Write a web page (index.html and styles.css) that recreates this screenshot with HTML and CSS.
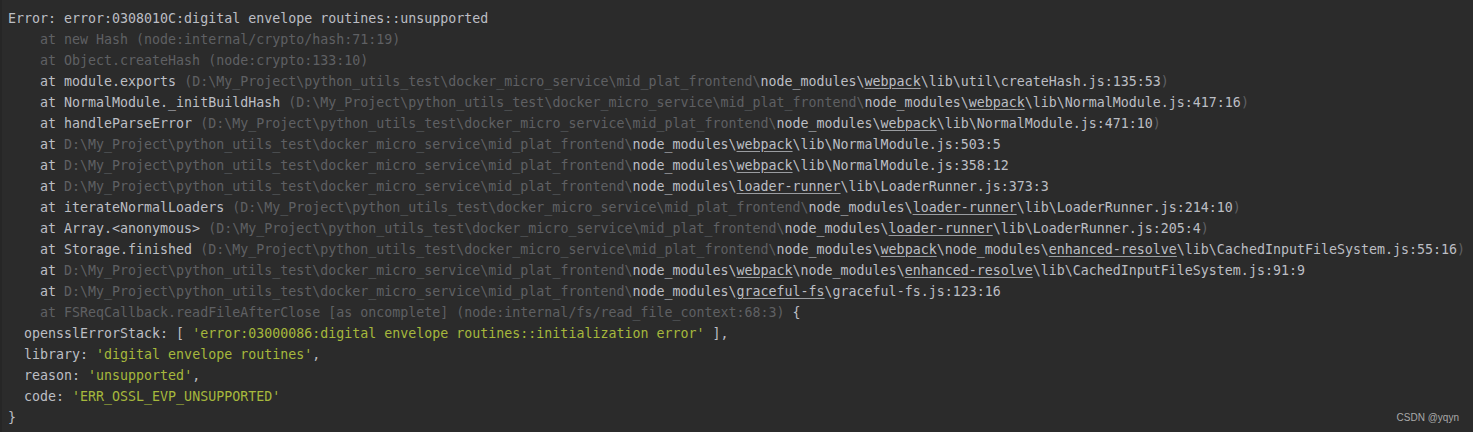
FILE: index.html
```html
<!DOCTYPE html>
<html lang="en">
<head>
<meta charset="utf-8">
<title>Console</title>
<link rel="stylesheet" href="styles.css">
</head>
<body>
<div class="console">
<div class="line">Error: error:0308010C:digital envelope routines::unsupported</div>
<div class="line dim">    at new Hash (node:internal/crypto/hash:71:19)</div>
<div class="line dim">    at Object.createHash (node:crypto:133:10)</div>
<div class="line">    at module.exports <span class="dim">(D:\My_Project\python_utils_test\docker_micro_service\mid_plat_frontend\</span>node_modules\<span class="u">webpack</span>\lib\util\createHash.js:135:53<span class="dim">)</span></div>
<div class="line">    at NormalModule._initBuildHash <span class="dim">(D:\My_Project\python_utils_test\docker_micro_service\mid_plat_frontend\</span>node_modules\<span class="u">webpack</span>\lib\NormalModule.js:417:16<span class="dim">)</span></div>
<div class="line">    at handleParseError <span class="dim">(D:\My_Project\python_utils_test\docker_micro_service\mid_plat_frontend\</span>node_modules\<span class="u">webpack</span>\lib\NormalModule.js:471:10<span class="dim">)</span></div>
<div class="line">    at <span class="dim">D:\My_Project\python_utils_test\docker_micro_service\mid_plat_frontend\</span>node_modules\<span class="u">webpack</span>\lib\NormalModule.js:503:5</div>
<div class="line">    at <span class="dim">D:\My_Project\python_utils_test\docker_micro_service\mid_plat_frontend\</span>node_modules\<span class="u">webpack</span>\lib\NormalModule.js:358:12</div>
<div class="line">    at <span class="dim">D:\My_Project\python_utils_test\docker_micro_service\mid_plat_frontend\</span>node_modules\<span class="u">loader-runner</span>\lib\LoaderRunner.js:373:3</div>
<div class="line">    at iterateNormalLoaders <span class="dim">(D:\My_Project\python_utils_test\docker_micro_service\mid_plat_frontend\</span>node_modules\<span class="u">loader-runner</span>\lib\LoaderRunner.js:214:10<span class="dim">)</span></div>
<div class="line">    at Array.&lt;anonymous&gt; <span class="dim">(D:\My_Project\python_utils_test\docker_micro_service\mid_plat_frontend\</span>node_modules\<span class="u">loader-runner</span>\lib\LoaderRunner.js:205:4<span class="dim">)</span></div>
<div class="line">    at Storage.finished <span class="dim">(D:\My_Project\python_utils_test\docker_micro_service\mid_plat_frontend\</span>node_modules\<span class="u">webpack</span>\node_modules\<span class="u">enhanced-resolve</span>\lib\CachedInputFileSystem.js:55:16<span class="dim">)</span></div>
<div class="line">    at <span class="dim">D:\My_Project\python_utils_test\docker_micro_service\mid_plat_frontend\</span>node_modules\<span class="u">webpack</span>\node_modules\<span class="u">enhanced-resolve</span>\lib\CachedInputFileSystem.js:91:9</div>
<div class="line">    at <span class="dim">D:\My_Project\python_utils_test\docker_micro_service\mid_plat_frontend\</span>node_modules\<span class="u">graceful-fs</span>\graceful-fs.js:123:16</div>
<div class="line"><span class="dim">    at FSReqCallback.readFileAfterClose [as oncomplete] (node:internal/fs/read_file_context:68:3)</span> {</div>
<div class="line">  opensslErrorStack: [ <span class="str">'error:03000086:digital envelope routines::initialization error'</span> ],</div>
<div class="line">  library: <span class="str">'digital envelope routines'</span>,</div>
<div class="line">  reason: <span class="str">'unsupported'</span>,</div>
<div class="line">  code: <span class="str">'ERR_OSSL_EVP_UNSUPPORTED'</span></div>
<div class="line">}</div>
</div>
<div class="watermark">CSDN @yqyn</div>
</body>
</html>
```

FILE: styles.css
```css
html, body {
  margin: 0;
  padding: 0;
  background: #2b2b2b;
  height: 100%;
  overflow: hidden;
}

body {
  position: relative;
  border-left: 2px solid #262626;
  box-sizing: border-box;
}

.console {
  padding: 8px 0 0 6px;
  font-family: "DejaVu Sans Mono", "Liberation Mono", monospace;
  font-size: 13.3px;
  line-height: 21px;
  color: #bcbec4;
}

.line {
  height: 21px;
  white-space: pre;
}

.dim {
  color: #5f6063;
}

.str {
  color: #a6b83c;
}

.u {
  text-decoration: underline;
  text-underline-offset: 2px;
  text-decoration-color: #9a9ca0;
}

.watermark {
  position: absolute;
  right: 14px;
  bottom: 9px;
  font-family: "Liberation Sans", Arial, sans-serif;
  font-size: 10px;
  color: #a9a9a9;
}
```
